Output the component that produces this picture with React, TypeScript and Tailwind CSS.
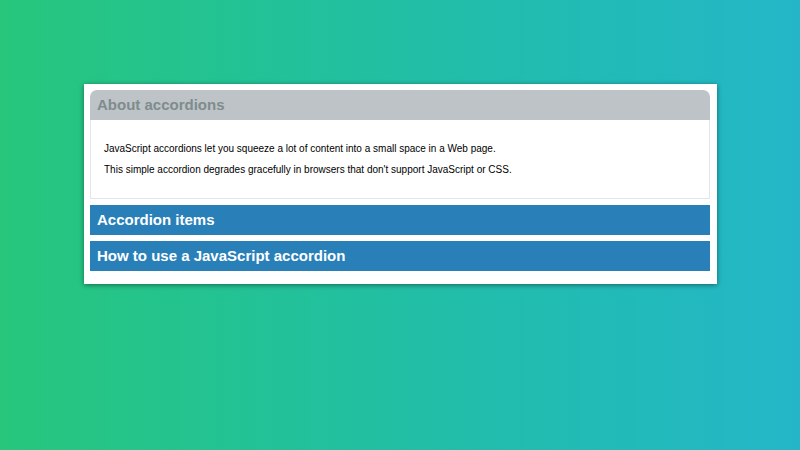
export default function App() {
  return (
    <div
      className="h-[450px] w-[800px] overflow-hidden bg-gradient-to-r from-[#27c67b] to-[#24b6c8] pt-[84px]"
      style={{ fontFamily: '"Liberation Sans", Arial, sans-serif' }}
    >
      <div className="mx-[84px] flex w-[633px] flex-col gap-[6px] bg-white pb-[13px] pl-[6px] pr-[7px] pt-[6px] shadow-[0_1px_5px_rgba(0,0,0,0.45)]">
        <section>
          <h2 className="flex h-[30px] items-center rounded-t-[7px] bg-[#bdc3c7] px-[7px] text-[15px] font-bold text-[#7f8c8d]">
            About accordions
          </h2>
          <div className="flex flex-col gap-[9px] border border-t-0 border-[#e3e6e8] px-[13px] pb-[22px] pt-[23px] text-[10px] leading-[12px] text-black">
            <p>JavaScript accordions let you squeeze a lot of content into a small space in a Web page.</p>
            <p>This simple accordion degrades gracefully in browsers that don't support JavaScript or CSS.</p>
          </div>
        </section>
        <h2 className="flex h-[30px] items-center bg-[#2980b9] px-[7px] text-[15px] font-bold text-white">
          Accordion items
        </h2>
        <h2 className="flex h-[30px] items-center bg-[#2980b9] px-[7px] text-[15px] font-bold text-white">
          How to use a JavaScript accordion
        </h2>
      </div>
    </div>
  );
}
